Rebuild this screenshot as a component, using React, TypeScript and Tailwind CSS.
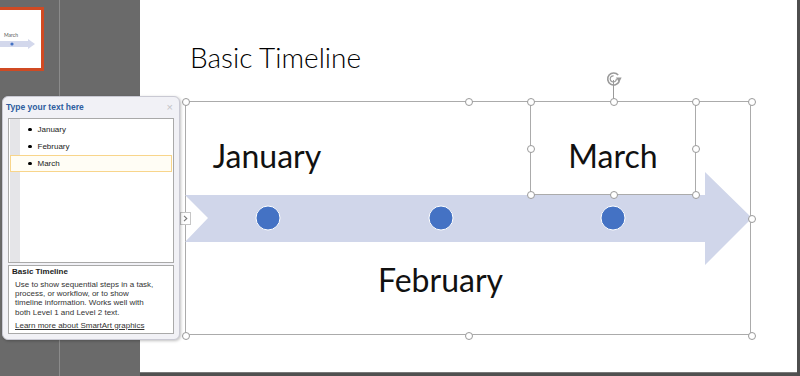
import React from 'react';

const slideFont = { fontFamily: 'Lato, "Open Sans", sans-serif' };
const uiFont = { fontFamily: '"Liberation Sans", Arial, sans-serif' };

function Handle({ x, y }: { x: number; y: number }) {
  return (
    <div
      className="absolute w-[8px] h-[8px] rounded-full bg-white border border-[#9a9a9a]"
      style={{ left: x - 4, top: y - 4 }}
    />
  );
}

function Thumbnail() {
  return (
    <div className="w-[44px] h-[64px] bg-white border-[3px] border-l-0 border-[#d04a23] flex flex-col pt-[23px]">
      <div className="pl-[4px] text-[5px] leading-none text-[#555]" style={slideFont}>
        March
      </div>
      <svg className="mt-[1px]" width="38" height="12" viewBox="0 0 38 12">
        <polygon points="0,2 28,2 28,0 35,5 28,10 28,8 0,8" fill="#d3d8ec" />
        <circle cx="12" cy="5" r="1.6" fill="#4472c4" />
      </svg>
    </div>
  );
}

function TextPane() {
  const items = ['January', 'February', 'March'];
  return (
    <div
      className="absolute left-[2px] top-[96px] w-[178px] h-[244px] rounded-[6px] bg-[#f1f1f6] border border-[#c9c9d3] shadow-[1px_1px_3px_rgba(0,0,0,0.25)] flex flex-col px-[5px]"
      style={uiFont}
    >
      <div className="flex items-center justify-between h-[21px]">
        <span className="text-[8.5px] font-bold text-[#2d5c9e] -ml-[2px]">Type your text here</span>
        <span className="text-[11px] text-[#c4c4c8] leading-none mr-[1px]">×</span>
      </div>
      <div className="h-[145px] bg-white border border-[#a9a9a9] flex">
        <div className="w-[10px] bg-[#e5e5e8] ml-[1px]" />
        <div className="flex-1 flex flex-col pt-[2px]">
          {items.map((t) => (
            <div
              key={t}
              className={
                'h-[17px] flex items-center text-[8px] text-[#222] ' +
                (t === 'March' ? 'bg-[#fffdf5] border border-[#f8d58b] -ml-[10px] pl-[17px] mr-[1px]' : 'pl-[8px]')
              }
            >
              <span className="w-[3.5px] h-[3.5px] rounded-full bg-black mr-[6px]" />
              {t}
            </div>
          ))}
        </div>
      </div>
      <div className="mt-[2px] h-[69px] overflow-hidden bg-white border border-[#a9a9a9] px-[3px] text-[8px] text-[#333]">
        <div className="font-bold text-[#222] leading-[12px]">Basic Timeline</div>
        <div className="pl-[3px] mt-[2px] leading-[9.2px]">
          Use to show sequential steps in a task,
          <br />
          process, or workflow, or to show
          <br />
          timeline information. Works well with
          <br />
          both Level 1 and Level 2 text.
        </div>
        <div className="pl-[3px] mt-[4px] leading-[10px] underline text-[#333]">Learn more about SmartArt graphics</div>
      </div>
    </div>
  );
}

function Diagram() {
  const dots = [83, 256, 428];
  return (
    <div className="relative w-[566px] h-[234px] border border-[#ababab] text-[32px] leading-[40px] text-[#111]" style={slideFont}>
      <svg className="absolute -left-px -top-px" width="568" height="236" viewBox="0 0 568 236">
        <polygon points="0,94 520,94 520,71 567,117 520,164 520,141 0,141 23,117" fill="#d0d6ea" />
        {dots.map((x) => (
          <circle key={x} cx={x} cy={117} r={12} fill="#4472c4" stroke="#ffffff" strokeWidth={1} />
        ))}
      </svg>

      {/* diagram text boxes */}
      <div className="relative -mt-px -ml-px grid grid-cols-[166px_166px_166px] grid-rows-[94px_47px_93px] gap-x-[6.5px] w-[512px]">
        <div className="text-center pt-[35px] pr-[2px]">January</div>
        <div />
        <div className="border border-[#ababab] flex items-center justify-center">
          <span className="mt-[16px]">March</span>
        </div>
        <div className="col-span-3" />
        <div />
        <div className="text-center pt-[18px]">February</div>
        <div />
      </div>

      {/* rotate handle */}
      <div className="absolute left-[427px] -top-[22px] w-px h-[22px] bg-[#9a9a9a]" />
      <svg className="absolute left-[418px] -top-[32px]" width="20" height="18" viewBox="0 0 20 18">
        <path d="M14.2 5A6 6 0 1 0 15.2 11.4" fill="none" stroke="#9a9a9a" strokeWidth="1.6" />
        <path d="M9.6 5.8A3.1 3.1 0 1 0 12.4 8.8" fill="none" stroke="#9a9a9a" strokeWidth="1.2" />
        <polygon points="12,7.4 17.6,7.4 15.2,12.4" fill="#9a9a9a" />
      </svg>

      {/* inner shape handles */}
      <Handle x={345} y={0} />
      <Handle x={428} y={0} />
      <Handle x={510} y={0} />
      <Handle x={345} y={47} />
      <Handle x={510} y={47} />
      <Handle x={345} y={93} />
      <Handle x={428} y={93} />
      <Handle x={510} y={93} />

      {/* frame handles */}
      <Handle x={0} y={0} />
      <Handle x={283} y={0} />
      <Handle x={566} y={0} />
      <Handle x={566} y={117} />
      <Handle x={0} y={234} />
      <Handle x={283} y={234} />
      <Handle x={566} y={234} />

      {/* expand text pane button */}
      <div className="absolute -left-[6px] top-[110px] w-[11px] h-[13px] bg-white border border-[#c6c6c6] flex items-center justify-center">
        <svg width="5" height="7" viewBox="0 0 5 7">
          <path d="M1 0.8L3.8 3.5L1 6.2" fill="none" stroke="#777" strokeWidth="1.1" />
        </svg>
      </div>
    </div>
  );
}

export default function App() {
  return (
    <div className="relative w-[800px] h-[376px] overflow-hidden bg-[#6a6a6a] flex">
      <div className="w-[60px] h-full border-r border-[#8b8b8b] pt-[7px]">
        <Thumbnail />
      </div>
      <div className="w-[80px] h-full" />
      <div className="flex flex-col">
        <div className="w-[657px] h-[372px] bg-white flex flex-col pt-[40px]">
          <div className="ml-[50px] text-[28px] leading-[34px] font-light text-black" style={slideFont}>
            Basic Timeline
          </div>
          <div className="ml-[45px] mt-[27px]">
            <Diagram />
          </div>
        </div>
        <div className="h-[4px] bg-[#505050] border-t border-[#7a7a7a]" />
      </div>
      <div className="flex-1 bg-[#4e4e4e]" />
      <TextPane />
    </div>
  );
}
